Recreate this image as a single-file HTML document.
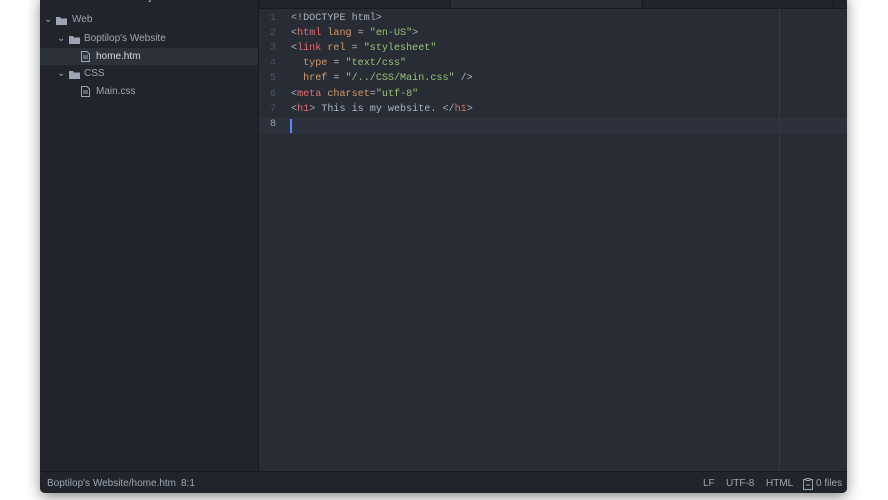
<!DOCTYPE html>
<html><head><style>
body{margin:0;width:888px;height:500px;background:#fff;position:relative;overflow:hidden;font-family:"Liberation Sans",sans-serif}
.win{position:absolute;left:40px;top:-6px;width:807px;height:499px;background:#282c34;border-radius:5px;box-shadow:0 4px 14px rgba(0,0,0,.45);overflow:hidden}
.side{position:absolute;left:0;top:0;width:218px;height:478px;background:#21252b;border-right:1px solid #181a1f}
.tabs{position:absolute;left:219px;top:0;right:0;height:14px;background:#21252b;border-bottom:1px solid #181a1f}
.tab{position:absolute;top:0;height:14px;color:#9da5b4;font-size:10px;text-align:center;line-height:8px}
.item{position:absolute;font-size:10px;color:#9da5b4;height:17px;line-height:17px}
.sel{position:absolute;left:0;width:218px;top:54px;height:17px;background:#2c313a}
.code{position:absolute;left:219px;top:14px;right:0;bottom:21px}
.ln{position:absolute;left:0;width:17px;text-align:right;font-family:"Liberation Mono",monospace;font-size:10.1px;color:#495162}
.l{position:absolute;left:32px;font-family:"Liberation Mono",monospace;font-size:10.1px;color:#abb2bf;white-space:pre}
.t{color:#e06c75}.a{color:#d19a66}.s{color:#98c379}
.status{position:absolute;left:0;right:0;bottom:0;height:21px;background:#21252b;border-top:1px solid #181a1f;color:#9da5b4;font-size:10px;line-height:24px}
svg{position:absolute}
</style></head><body>
<div class="win">
<div class="side">
<div class="tab" style="left:0;width:218px;top:0;color:#d7dae0">Project</div>
<div class="sel"></div>
<div class="item" style="left:4px;top:17px">⌄</div>
<svg style="left:16px;top:22px" width="11" height="9"><path d="M0 1h4l1 1.5h6V9H0z" fill="#9da5b4"/></svg>
<div class="item" style="left:32px;top:17px">Web</div>
<div class="item" style="left:17px;top:36px">⌄</div>
<svg style="left:29px;top:41px" width="11" height="9"><path d="M0 1h4l1 1.5h6V9H0z" fill="#9da5b4"/></svg>
<div class="item" style="left:44px;top:36px">Boptilop's Website</div>
<svg style="left:41px;top:57px" width="9" height="11"><path d="M.5.5h5.5l2.5 2.5v7.5h-8z M2 5h5M2 7h5" fill="none" stroke="#9da5b4"/></svg>
<div class="item" style="left:56px;top:54px;color:#d7dae0">home.htm</div>
<div class="item" style="left:17px;top:71px">⌄</div>
<svg style="left:29px;top:76px" width="11" height="9"><path d="M0 1h4l1 1.5h6V9H0z" fill="#9da5b4"/></svg>
<div class="item" style="left:44px;top:71px">CSS</div>
<svg style="left:41px;top:92px" width="9" height="11"><path d="M.5.5h5.5l2.5 2.5v7.5h-8z M2 5h5M2 7h5" fill="none" stroke="#9da5b4"/></svg>
<div class="item" style="left:56px;top:89px">Main.css</div>
</div>
<div class="tabs">
<div class="tab" style="left:0;width:191px;border-right:1px solid #181a1f">untitled</div>
<div class="tab" style="left:192px;width:190px;background:#282c34;color:#d7dae0">home.htm</div>
<div class="tab" style="left:383px;width:190px;border-left:1px solid #181a1f;border-right:1px solid #181a1f">Main.css</div>
</div>
<div class="code">
<div style="position:absolute;left:0;right:0;top:110px;height:16px;background:#2c313c"></div>
<div style="position:absolute;left:520px;top:0;bottom:0;width:1px;background:#343944"></div>
<div style="position:absolute;left:31px;top:111px;width:2px;height:14px;background:#528bff"></div>
<div class="ln" style="top:5px">1</div><div class="l" style="top:5px">&lt;!DOCTYPE html&gt;</div>
<div class="ln" style="top:20px">2</div><div class="l" style="top:20px">&lt;<span class="t">html</span> <span class="a">lang</span> = <span class="s">"en-US"</span>&gt;</div>
<div class="ln" style="top:35px">3</div><div class="l" style="top:35px">&lt;<span class="t">link</span> <span class="a">rel</span> = <span class="s">"stylesheet"</span></div>
<div class="ln" style="top:50px">4</div><div class="l" style="top:50px">  <span class="a">type</span> = <span class="s">"text/css"</span></div>
<div class="ln" style="top:65px">5</div><div class="l" style="top:65px">  <span class="a">href</span> = <span class="s">"/../CSS/Main.css"</span> /&gt;</div>
<div class="ln" style="top:81px">6</div><div class="l" style="top:81px">&lt;<span class="t">meta</span> <span class="a">charset</span>=<span class="s">"utf-8"</span></div>
<div class="ln" style="top:96px">7</div><div class="l" style="top:96px">&lt;<span class="t">h1</span>&gt; This is my website. &lt;/<span class="t">h1</span>&gt;</div>
<div class="ln" style="top:111px;color:#9da5b4">8</div>
</div>
<div class="status">
<span style="position:absolute;left:7px">Boptilop's Website/home.htm</span>
<span style="position:absolute;left:141px">8:1</span>
<span style="position:absolute;left:663px">LF</span>
<span style="position:absolute;left:686px">UTF-8</span>
<span style="position:absolute;left:726px">HTML</span>
<svg style="left:763px;top:6px" width="10" height="12"><path d="M.5 1.5h2M7.5 1.5h2v10h-9v-10M3 .5h4v2H3z M3 7h4" fill="none" stroke="#9da5b4"/></svg>
<span style="position:absolute;left:776px">0 files</span>
</div>
</div>
</body></html>
